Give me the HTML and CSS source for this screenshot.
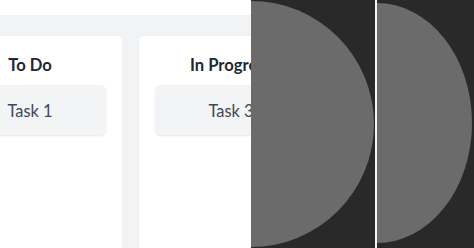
FILE: index.html
```html
<!DOCTYPE html>
<html>
<head>
<meta charset="utf-8">
<link rel="stylesheet" href="styles.css">
</head>
<body>
<div class="page">
  <div class="board-wrap">
    <div class="board">
      <section class="column">
        <h2 class="column-title">To Do</h2>
        <div class="task">Task 1</div>
      </section>
      <section class="column">
        <h2 class="column-title">In Progress</h2>
        <div class="task">Task 3</div>
      </section>
    </div>
  </div>
  <div class="viewer">
    <div class="pane pane-a">
      <svg width="124" height="248" viewBox="0 0 124 248"><ellipse cx="0" cy="124" rx="123" ry="123" fill="#6b6b6b"/></svg>
    </div>
    <div class="divider"></div>
    <div class="pane pane-b">
      <svg width="97" height="248" viewBox="0 0 97 248"><ellipse cx="0" cy="123" rx="95" ry="120" fill="#6b6b6b"/></svg>
    </div>
  </div>
</div>
</body>
</html>
```

FILE: styles.css
```css
* { box-sizing: border-box; }
html, body { margin: 0; padding: 0; }
body {
  width: 474px;
  height: 248px;
  overflow: hidden;
  background: #ffffff;
  font-family: Lato, "Noto Sans", sans-serif;
}
.page {
  display: flex;
  height: 248px;
}
.board-wrap {
  flex: 0 0 251px;
  overflow: hidden;
  padding-top: 15px;
}
.board {
  background: #f2f3f5;
  height: 100%;
  margin-left: -78px;
  padding: 21px 16px 0 16px;
  display: flex;
  gap: 17px;
  width: 600px;
}
.column {
  flex: 0 0 184px;
  background: #ffffff;
  border-radius: 4px 4px 0 0;
  padding: 20px 16px 0 16px;
  box-shadow: 0 0 1px rgba(0,0,0,0.08);
  text-align: center;
}
.column-title {
  margin: 0 0 10px 0;
  font-size: 16.6px;
  font-weight: 700;
  line-height: 19px;
  color: #1f2733;
}
.task {
  background: #f3f4f6;
  border-radius: 6px;
  padding: 16px 0 15px;
  font-size: 16.4px;
  line-height: 19px;
  color: #404754;
  box-shadow: 0 1px 2px rgba(0,0,0,0.10);
}
.viewer {
  flex: 1;
  display: flex;
  background: #292929;
}
.pane { height: 248px; }
.pane svg { display: block; }
.pane-a { flex: 0 0 124px; }
.divider {
  flex: 0 0 2px;
  background: #f4f4f4;
}
.pane-b { flex: 1; }
```
